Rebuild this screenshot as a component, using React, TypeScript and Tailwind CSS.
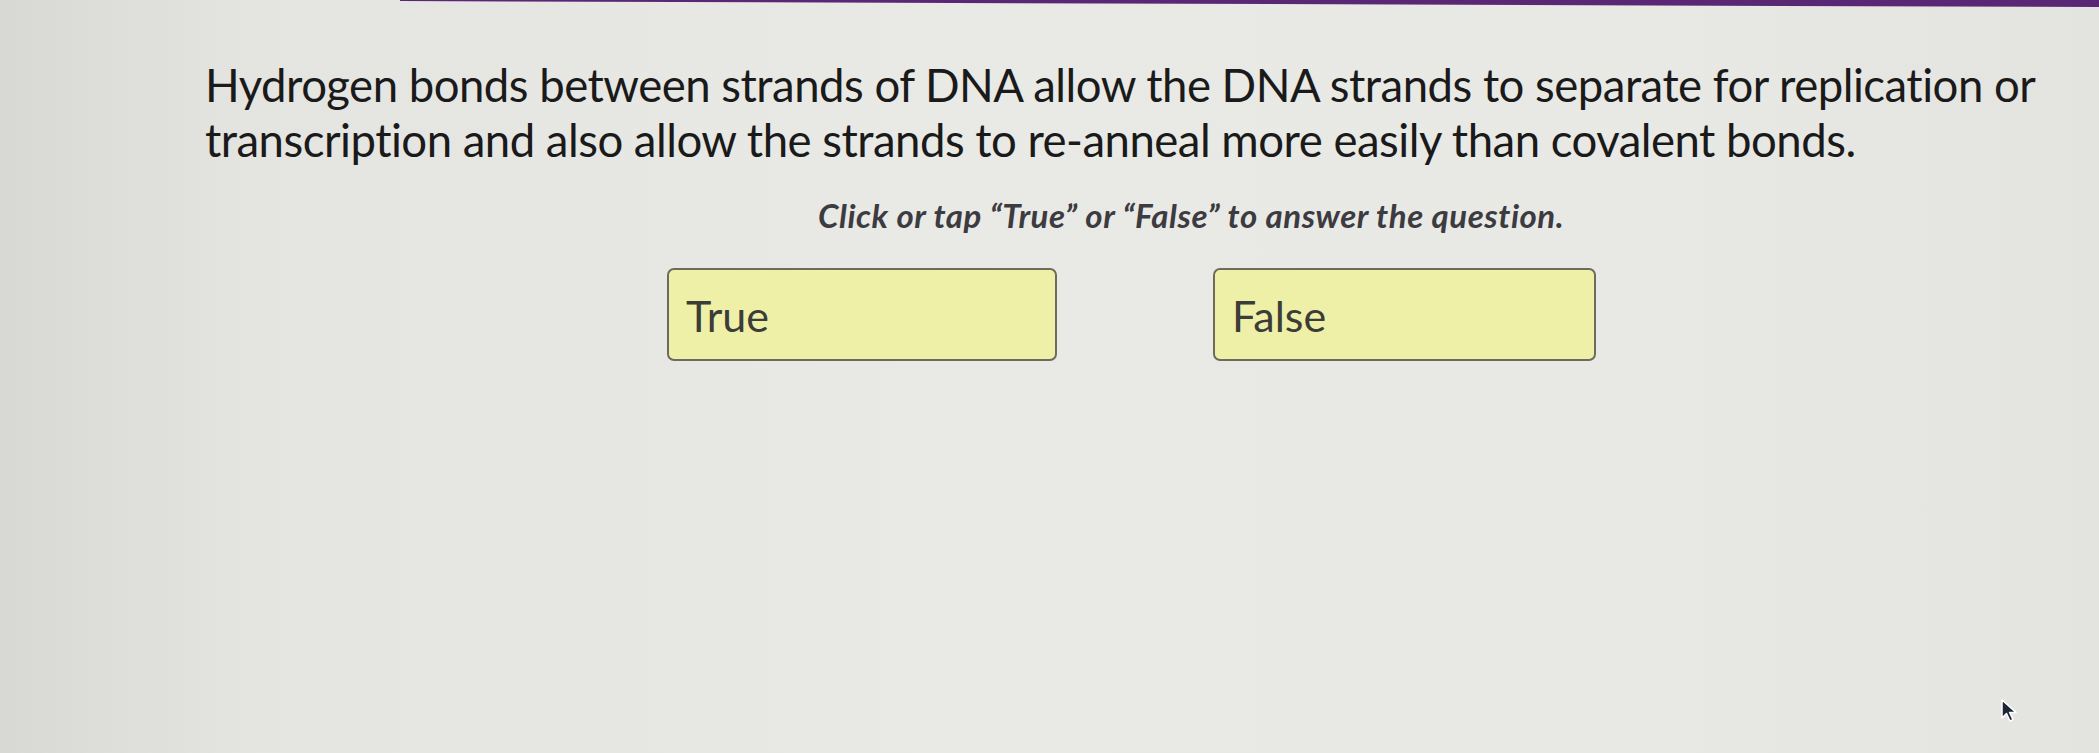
export default function App() {
  return (
    <div className="relative min-h-[753px] w-full overflow-hidden bg-[linear-gradient(90deg,#d8d8d5_0%,#e4e4e1_12%,#e9e9e6_45%,#e8e8e5_80%,#e3e3e0_100%)] font-['Lato',sans-serif]">
      <div className="ml-[400px] h-[7px] bg-[#5a2775] [clip-path:polygon(0_0,100%_0,100%_100%,0_15%)]" />

      <div className="pl-[205px] pt-[50px]">
        <h1 className="max-w-[1860px] text-[45.5px] leading-[55px] text-[#1a1a1a] tracking-[-0.5px]">
          Hydrogen bonds between strands of DNA allow the DNA strands to separate for replication or
          transcription and also allow the strands to re-anneal more easily than covalent bonds.
        </h1>

        <p className="ml-[613px] mt-[30px] text-[33px] leading-[36px] font-bold italic text-[#3b3b40] tracking-[0.55px]">
          Click or tap “True” or “False” to answer the question.
        </p>

        <div className="ml-[462px] mt-[35px] flex gap-[156px]">
          <button className="flex h-[93px] w-[390px] items-center rounded-[7px] border-2 border-[#6d6b5c] bg-[#eef0a8] pb-[1px] pl-[17px] pt-[4px] text-[43px] text-[#3c3c38]">
            True
          </button>
          <button className="flex h-[93px] w-[383px] items-center rounded-[7px] border-2 border-[#6d6b5c] bg-[#eef0a8] pb-[1px] pl-[17px] pt-[4px] text-[43px] text-[#3c3c38]">
            False
          </button>
        </div>
      </div>

      <svg className="absolute left-[2000px] top-[698px]" width="20" height="26" viewBox="0 0 20 26">
        <path d="M2 2 L2 20 L6.5 15.5 L10 23 L13 21.6 L9.6 14.4 L16 14.4 Z" fill="#1d2637" stroke="#ffffff" strokeWidth="1.5" strokeLinejoin="round" />
      </svg>
    </div>
  );
}
